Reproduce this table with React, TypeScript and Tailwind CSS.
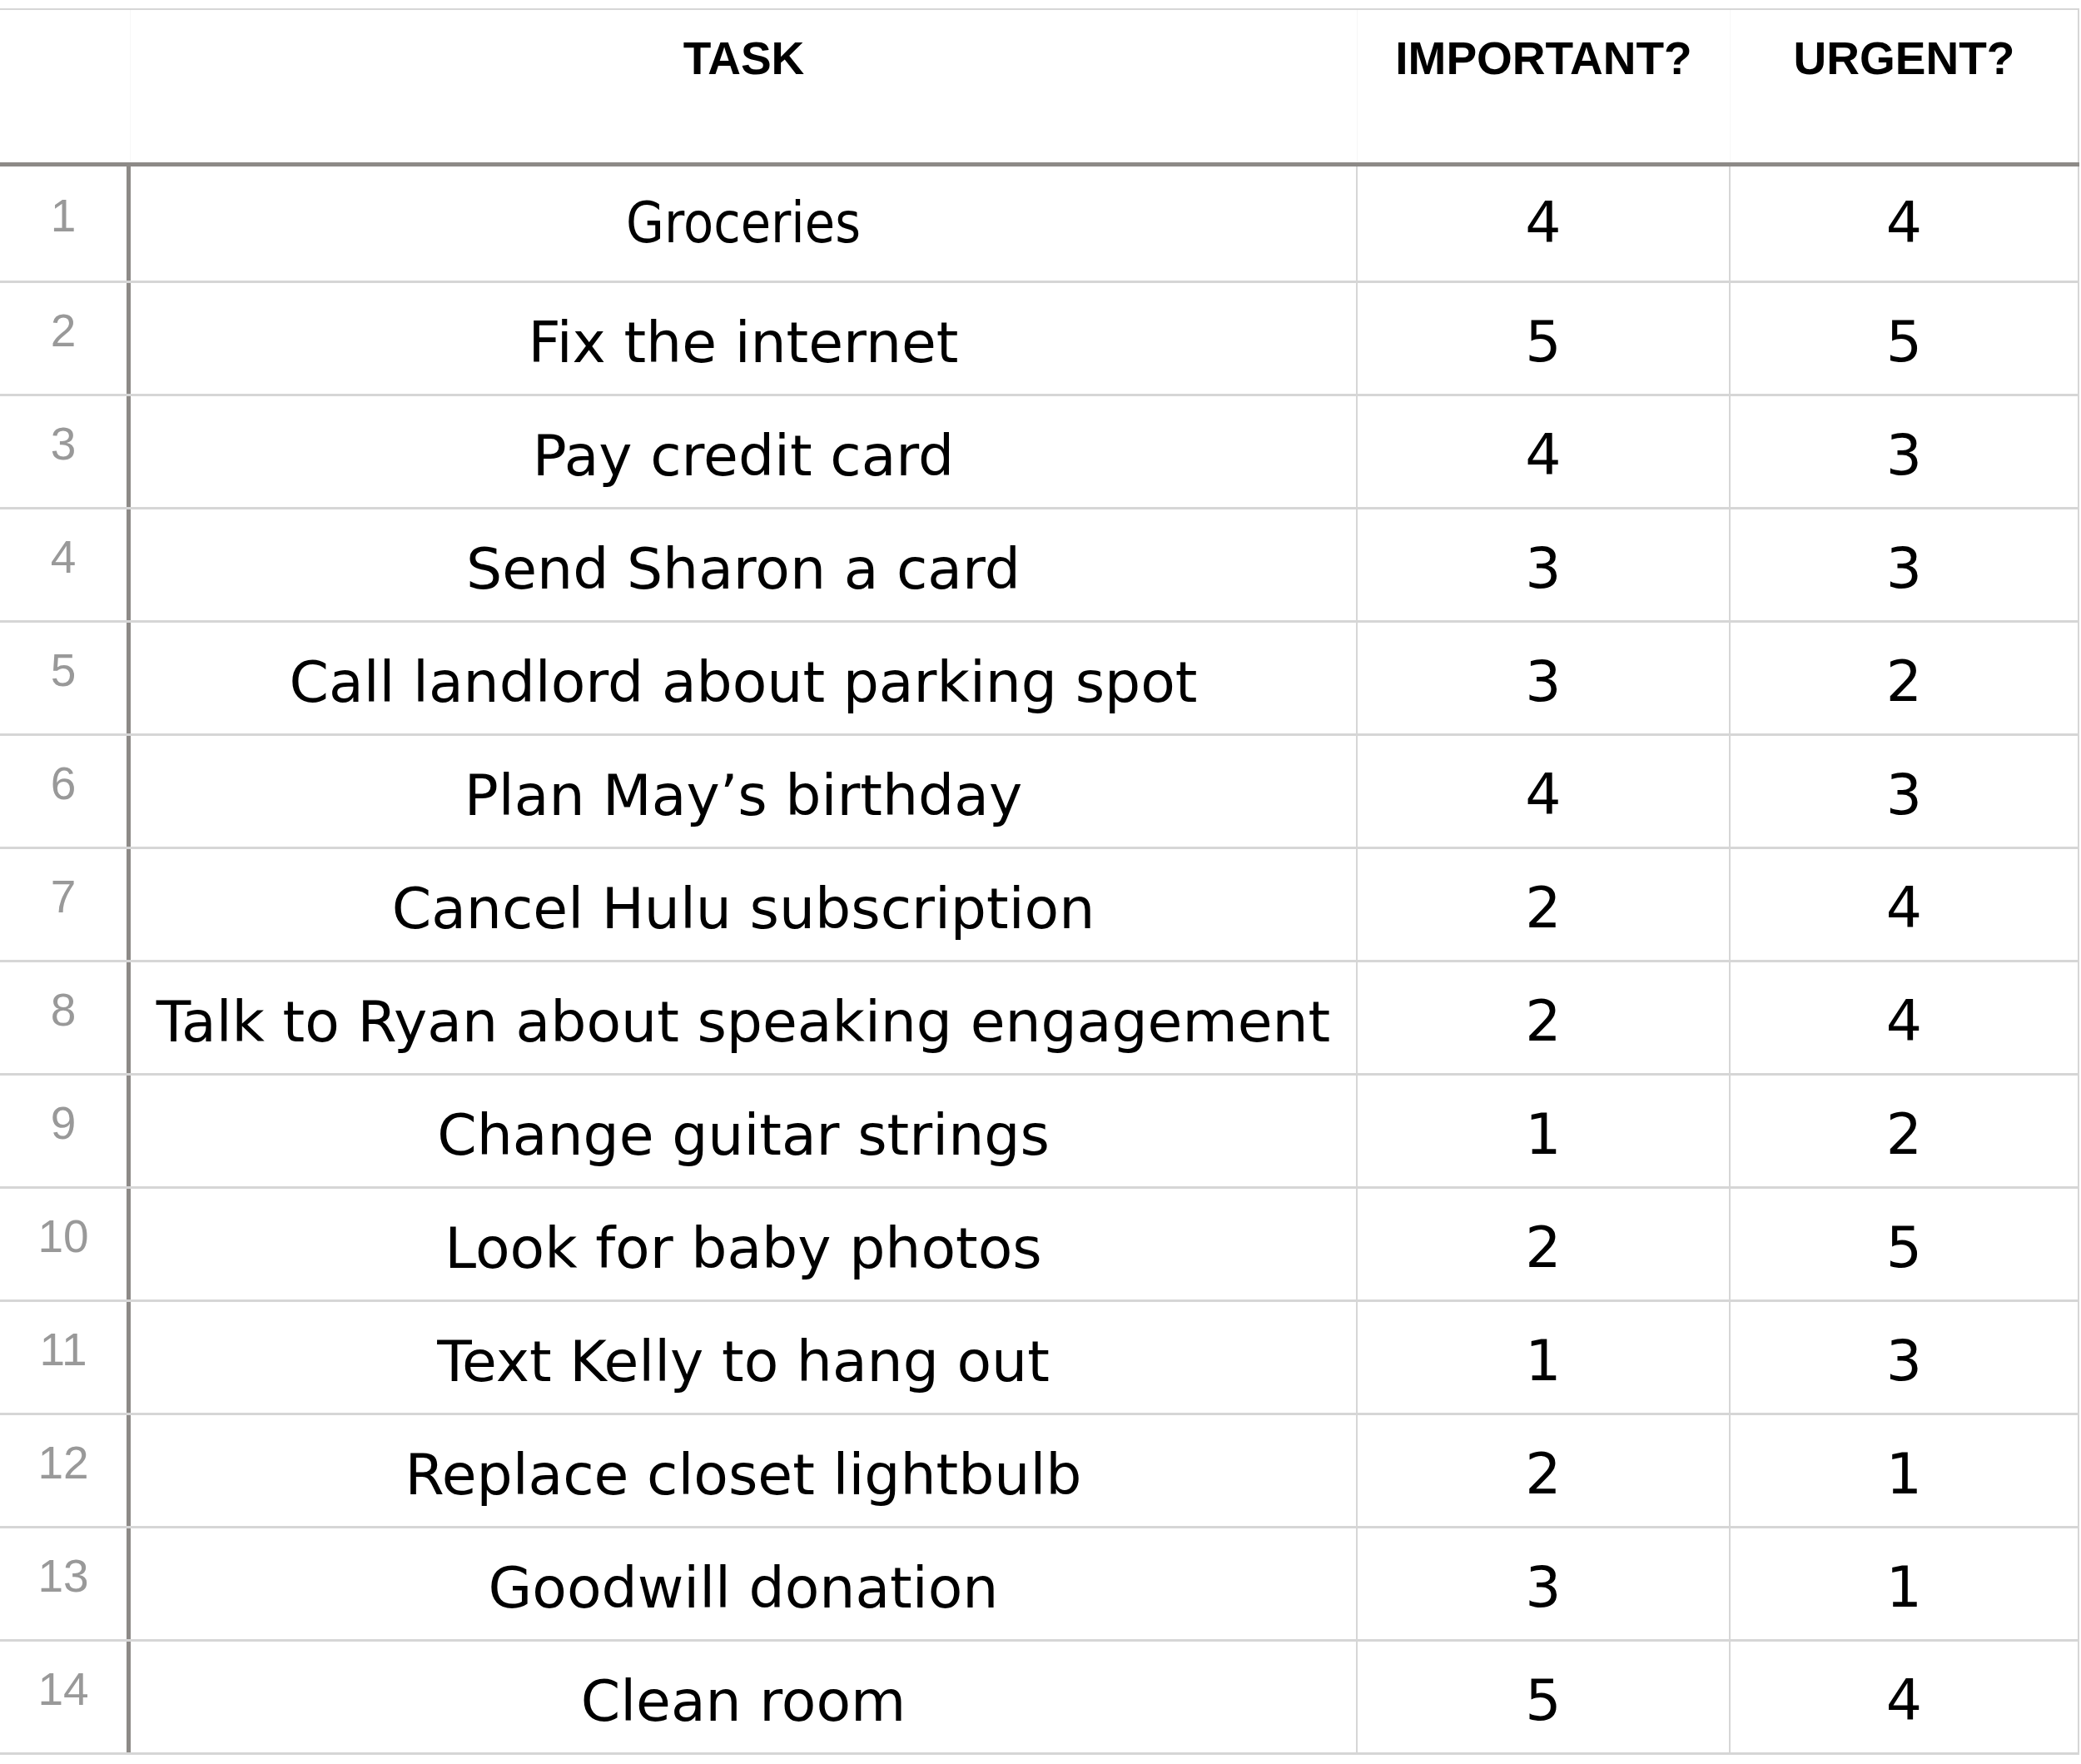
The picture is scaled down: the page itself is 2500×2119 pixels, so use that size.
const rows = [
  { task: "Groceries", important: 4, urgent: 4 },
  { task: "Fix the internet", important: 5, urgent: 5 },
  { task: "Pay credit card", important: 4, urgent: 3 },
  { task: "Send Sharon a card", important: 3, urgent: 3 },
  { task: "Call landlord about parking spot", important: 3, urgent: 2 },
  { task: "Plan May\u2019s birthday", important: 4, urgent: 3 },
  { task: "Cancel Hulu subscription", important: 2, urgent: 4 },
  { task: "Talk to Ryan about speaking engagement", important: 2, urgent: 4 },
  { task: "Change guitar strings", important: 1, urgent: 2 },
  { task: "Look for baby photos", important: 2, urgent: 5 },
  { task: "Text Kelly to hang out", important: 1, urgent: 3 },
  { task: "Replace closet lightbulb", important: 2, urgent: 1 },
  { task: "Goodwill donation", important: 3, urgent: 1 },
  { task: "Clean room", important: 5, urgent: 4 },
];

const cols = "grid grid-cols-[157px_1474px_448px_419px]";
const cellText = "font-['DejaVu_Sans',sans-serif] text-[68px] leading-none text-black";

const App = () => {
  return (
    <div className="w-[2500px] h-[2119px] bg-white pt-[10px]">
      <div className="w-[2498px] border-t-2 border-[#d6d6d6]">
        {/* header */}
        <div className={`${cols} h-[188px] border-b-[5px] border-[#8d8a87] font-['Liberation_Sans',Arial,sans-serif] font-bold text-[55px] leading-none text-black`}>
          <div className="border-r border-[#f7f7f7]"></div>
          <div className="flex justify-center pt-[31px] border-r border-[#f7f7f7]">TASK</div>
          <div className="flex justify-center pt-[31px] border-r border-[#f7f7f7]">IMPORTANT?</div>
          <div className="flex justify-center pt-[31px] border-r-2 border-[#d6d6d6]">URGENT?</div>
        </div>

        {/* body */}
        {rows.map((row, i) => {
          const shift = i === 0 ? "pb-[2px]" : "pt-[8px]";
          return (
            <div
              key={i}
              className={`${cols} ${i === 0 ? "h-[140px]" : "h-[136px]"} border-b-[3px] border-[#d6d6d6]`}
            >
              <div className="flex justify-center items-center pb-[18px] border-r-[5px] border-[#8d8a87] font-['Liberation_Sans',Arial,sans-serif] text-[55px] leading-none text-[#999999]">
                {i + 1}
              </div>
              <div className={`flex justify-center items-center ${i === 0 ? "pb-[2px]" : "pt-[10px]"} border-r-2 border-[#d6d6d6] ${cellText}`}>
                <span className={i === 0 ? "inline-block scale-x-[0.87]" : ""}>{row.task}</span>
              </div>
              <div className={`flex justify-center items-center ${shift} border-r-2 border-[#d6d6d6] ${cellText}`}>
                {row.important}
              </div>
              <div className={`flex justify-center items-center ${shift} border-r-2 border-[#d6d6d6] ${cellText}`}>
                {row.urgent}
              </div>
            </div>
          );
        })}
      </div>
    </div>
  );
};

export default App;
